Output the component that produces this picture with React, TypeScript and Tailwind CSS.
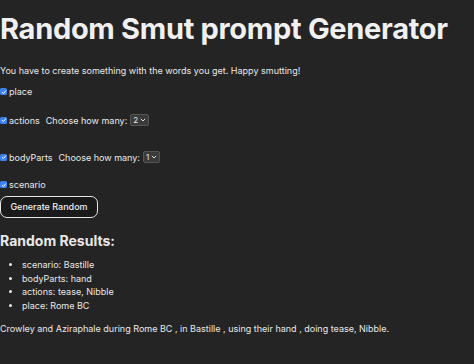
import React from "react";

function Check({ label }: { label: string }) {
  return (
    <span className="flex items-center gap-[2px]">
      <span className="w-[7px] h-[7px] rounded-[1.5px] bg-[#3b82f6] flex items-center justify-center">
        <svg width="6" height="6" viewBox="0 0 6 6"><path d="M1 3.2 L2.4 4.5 L5 1.5" stroke="white" strokeWidth="1" fill="none" /></svg>
      </span>
      <span>{label}</span>
    </span>
  );
}

function Sel({ v }: { v: string }) {
  return (
    <span className="ml-[3px] inline-flex items-center gap-[2px] bg-[#3a3a3a] border border-[#555] rounded-[2px] px-[2px] h-[12px] text-[8px] leading-none">
      <span>{v}</span>
      <svg width="6" height="4" viewBox="0 0 6 4"><path d="M0.8 0.8 L3 3 L5.2 0.8" stroke="#ddd" strokeWidth="1" fill="none" /></svg>
    </span>
  );
}

export default function App() {
  return (
    <div className="w-[474px] h-[364px] bg-[#242424] text-[#e8e8e8] overflow-hidden" style={{ fontFamily: "Inter, 'Noto Sans', sans-serif" }}>
      <h1 className="text-[29px] font-bold leading-none pt-[14px] whitespace-nowrap tracking-[-0.3px] text-[#f0f0f0]">Random Smut prompt Generator</h1>
      <p className="text-[9px] mt-[23px] leading-none">You have to create something with the words you get. Happy smutting!</p>
      <div className="text-[9px] leading-none">
        <div className="mt-[12px]"><Check label="place" /></div>
        <div className="mt-[18px] flex items-center"><Check label="actions" /><span className="ml-[6px]">Choose how many:</span><Sel v="2" /></div>
        <div className="mt-[25px] flex items-center"><Check label="bodyParts" /><span className="ml-[6px]">Choose how many:</span><Sel v="1" /></div>
        <div className="mt-[17px]"><Check label="scenario" /></div>
      </div>
      <button className="mt-[7px] h-[22px] w-[98px] rounded-[7px] border border-[#e5e5e5] bg-[#1a1a1a] text-[9px] font-medium text-[#eee]">Generate Random</button>
      <h2 className="text-[14px] font-bold mt-[16px] leading-none">Random Results:</h2>
      <ul className="list-disc pl-[22px] mt-[10px] text-[9px] leading-[13.5px]">
        <li>scenario: Bastille</li>
        <li>bodyParts: hand</li>
        <li>actions: tease, Nibble</li>
        <li>place: Rome BC</li>
      </ul>
      <p className="text-[9px] mt-[12px] leading-none whitespace-nowrap">Crowley and Aziraphale during Rome BC , in Bastille , using their hand , doing tease, Nibble.</p>
    </div>
  );
}
